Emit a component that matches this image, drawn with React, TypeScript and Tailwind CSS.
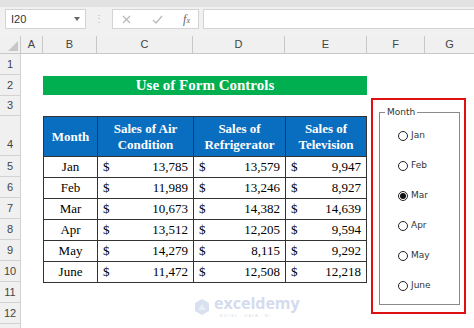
import React from "react";

const cols = ["A", "B", "C", "D", "E", "F", "G"];
const rowNums = [1, 2, 3, 4, 5, 6, 7, 8, 9, 10, 11, 12, 13];

const data = [
  { m: "Jan", a: "13,785", r: "13,579", t: "9,947" },
  { m: "Feb", a: "11,989", r: "13,246", t: "8,927" },
  { m: "Mar", a: "10,673", r: "14,382", t: "14,639" },
  { m: "Apr", a: "13,512", r: "12,205", t: "9,594" },
  { m: "May", a: "14,279", r: "8,115", t: "9,292" },
  { m: "June", a: "11,472", r: "12,508", t: "12,218" },
];

const radios = ["Jan", "Feb", "Mar", "Apr", "May", "June"];

function Money({ v }: { v: string }) {
  return (
    <td className="border border-[#333] px-[5px]">
      <div className="flex justify-between">
        <span>$</span>
        <span>{v}</span>
      </div>
    </td>
  );
}

export default function App() {
  return (
    <div className="relative w-[474px] h-[328px] overflow-hidden bg-white font-['Liberation_Sans',sans-serif]">
      {/* formula bar */}
      <div className="h-[36px] bg-[#f1f1f1] border-t-[7px] border-[#e2e2e2] flex items-start pt-[2px] pl-[5px]">
        <div className="w-[81px] h-[20px] bg-white border border-[#d4d4d4] flex items-center justify-between px-[5px] text-[11px] text-[#333]">
          <span>I20</span>
          <span className="w-0 h-0 border-l-[3px] border-r-[3px] border-t-[4px] border-l-transparent border-r-transparent border-t-[#666]" />
        </div>
        <div className="w-[26px] h-[20px] flex items-center justify-center text-[#bbb] text-[10px] leading-none">⋮</div>
        <div className="w-[87px] h-[20px] bg-white border border-[#d4d4d4] flex items-center justify-between pl-[9px] pr-[8px]">
          <svg width="9" height="9" viewBox="0 0 9 9">
            <path d="M1 1L8 8M8 1L1 8" stroke="#b8b8b8" strokeWidth="1.2" />
          </svg>
          <svg width="11" height="9" viewBox="0 0 11 9">
            <path d="M1 5L4 8L10 1" stroke="#b8b8b8" strokeWidth="1.2" fill="none" />
          </svg>
          <span className="font-['Liberation_Serif',serif] italic text-[12px] text-[#666]">
            f<span className="text-[8px]">x</span>
          </span>
        </div>
        <div className="ml-[4px] flex-1 h-[20px] bg-white border-l border-y border-[#d4d4d4]" />
      </div>

      {/* sheet */}
      <div className="grid grid-cols-[21px_22px_54px_96px_92px_82px_58px_50px] grid-rows-[18px_21px_21px_20px_40px_21px_21px_21px_21px_21px_21px_21px_21px_21px]">
        {/* corner */}
        <div className="row-start-1 col-start-1 bg-[#f0f0f0] border-b border-r border-[#c8c8c8] relative">
          <span className="absolute right-[2px] bottom-[2px] w-0 h-0 border-l-[10px] border-l-transparent [border-bottom:10px_solid_#c6c6c6]" />
        </div>
        {cols.map((c, i) => (
          <div
            key={c}
            className="row-start-1 bg-[#f0f0f0] border-b border-r border-[#c8c8c8] flex items-center justify-center text-[11px] text-[#444]"
            style={{ gridColumnStart: i + 2 }}
          >
            {c}
          </div>
        ))}
        {rowNums.map((n, i) => (
          <div
            key={n}
            className={`col-start-1 bg-[#f0f0f0] border-b border-r border-[#d2d2d2] flex justify-center text-[11px] text-[#444] ${
              n === 4 ? "items-end pb-[3px]" : "items-center"
            }`}
            style={{ gridRowStart: i + 2 }}
          >
            {n < 13 ? n : ""}
          </div>
        ))}

        {/* title */}
        <div className="row-start-3 col-start-3 col-span-4 my-[1px] bg-[#00b050] flex items-center justify-center text-white font-bold text-[15px] font-['Liberation_Serif',serif]">
          Use of Form Controls
        </div>

        {/* table */}
        <div className="row-start-5 row-span-7 col-start-3 col-span-4">
          <table className="w-full h-full border-collapse font-['Liberation_Serif',serif] text-[13px] text-black">
            <thead>
              <tr className="h-[40px] bg-[#0a6ec0] text-white leading-[16px]">
                <th className="border border-[#333] w-[54px] font-bold">Month</th>
                <th className="border border-[#333] w-[96px] font-bold">
                  Sales of Air
                  <br />
                  Condition
                </th>
                <th className="border border-[#333] w-[92px] font-bold">
                  Sales of
                  <br />
                  Refrigerator
                </th>
                <th className="border border-[#333] font-bold">
                  Sales of
                  <br />
                  Television
                </th>
              </tr>
            </thead>
            <tbody>
              {data.map((d) => (
                <tr key={d.m} className="h-[21px]">
                  <td className="border border-[#333] text-center">{d.m}</td>
                  <Money v={d.a} />
                  <Money v={d.r} />
                  <Money v={d.t} />
                </tr>
              ))}
            </tbody>
          </table>
        </div>
      </div>

      {/* watermark */}
      <div className="absolute left-[193px] top-[296px] flex items-center gap-[3px] opacity-70">
        <svg width="18" height="18" viewBox="0 0 18 18">
          <path d="M9 1L16 5V13L9 17L2 13V5Z" fill="#c9d3ea" />
          <path d="M5 12L9 6L13 12Z" fill="#e3e8f4" />
        </svg>
        <div className="flex flex-col">
          <span className="text-[16px] font-bold text-[#c2cde8] font-['Open_Sans',sans-serif] leading-[15px]">exceldemy</span>
          <span className="mt-[2px] text-[4px] leading-[5px] tracking-[1px] text-[#c8cfe0] pl-[6px]">EXCEL · DATA · BI</span>
        </div>
      </div>

      {/* form control */}
      <div className="absolute left-[371px] top-[98px] w-[95px] h-[216px] border-2 border-[#e01010]" />
      <div className="absolute left-[379px] top-[112px] w-[81px] h-[193px] border border-[#8a8a8a]">
        <span className="absolute left-[5px] -top-[7px] bg-white px-[2px] text-[9px] leading-[12px] text-[#333] font-['DejaVu_Sans',sans-serif]">
          Month
        </span>
        <div className="flex flex-col gap-[20px] pt-[18px] pl-[18px]">
          {radios.map((r) => (
            <div key={r} className="flex items-center gap-[3px] h-[10px] text-[9px] text-[#333] font-['DejaVu_Sans',sans-serif]">
              <span className="w-[10px] h-[10px] rounded-full border border-[#222] bg-white flex items-center justify-center">
                {r === "Mar" && <span className="w-[6px] h-[6px] rounded-full bg-[#111]" />}
              </span>
              <span>{r}</span>
            </div>
          ))}
        </div>
      </div>
    </div>
  );
}
